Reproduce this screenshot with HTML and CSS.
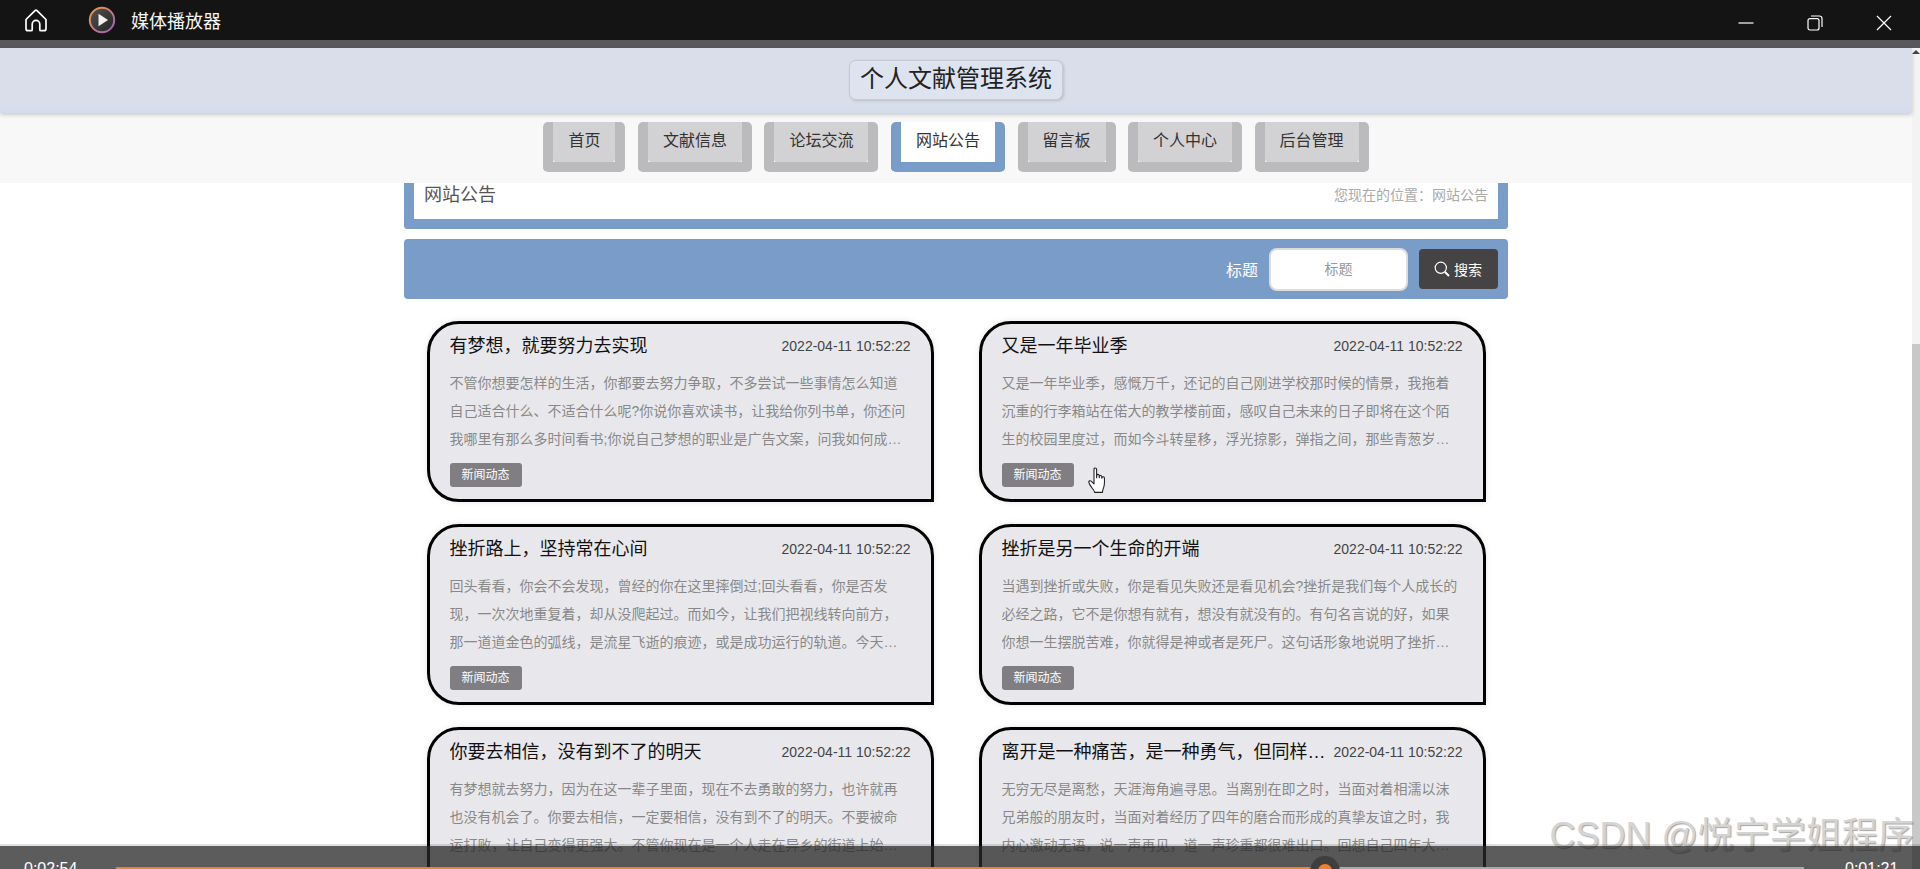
FILE: index.html
```html
<!DOCTYPE html>
<html lang="zh-CN">
<head>
    <meta charset="UTF-8">
    <title>媒体播放器</title>
    <link rel="stylesheet" href="styles.css">
</head>
<body>
    <div class="titlebar">
        <svg class="home-icon" width="24" height="24" viewBox="0 0 24 24" fill="none" stroke="#fff" stroke-width="1.7" stroke-linejoin="round">
            <path d="M2 11.5 11 2.6a1.4 1.4 0 0 1 2 0l9 8.9v9.2a2 2 0 0 1-2 2h-3.2a1 1 0 0 1-1-1v-5.5a3.8 3.8 0 0 0-7.6 0v5.5a1 1 0 0 1-1 1H4a2 2 0 0 1-2-2z"/>
        </svg>
        <svg class="player-logo" width="28" height="28" viewBox="0 0 28 28">
            <defs>
                <linearGradient id="ringGrad" x1="0" y1="0" x2="1" y2="1">
                    <stop offset="0" stop-color="#f59a3c"/>
                    <stop offset="1" stop-color="#9a5cc4"/>
                </linearGradient>
                <linearGradient id="discGrad" x1="0" y1="0" x2="1" y2="1">
                    <stop offset="0" stop-color="#555"/>
                    <stop offset="1" stop-color="#222"/>
                </linearGradient>
            </defs>
            <circle cx="14" cy="14" r="12.2" fill="url(#discGrad)" stroke="url(#ringGrad)" stroke-width="2"/>
            <path d="M10.5 7.8 20 14l-9.5 6.2z" fill="#f2f2f2"/>
        </svg>
        <span class="app-name">媒体播放器</span>
        <div class="window-btns">
            <span class="window-btn">
                <svg width="16" height="16" viewBox="0 0 16 16" stroke="#fff" stroke-width="1.2"><path d="M0.5 8h15"/></svg>
            </span>
            <span class="window-btn">
                <svg width="16" height="16" viewBox="0 0 16 16" fill="none" stroke="#fff" stroke-width="1.2">
                    <rect x="1" y="3.6" width="11" height="11.4" rx="2"/>
                    <path d="M4 1h8.5A2.5 2.5 0 0 1 15 3.5V12"/>
                </svg>
            </span>
            <span class="window-btn">
                <svg width="16" height="16" viewBox="0 0 16 16" stroke="#fff" stroke-width="1.2"><path d="M1 1l14 14M15 1 1 15"/></svg>
            </span>
        </div>
    </div>
    <div class="titlebar-strip"></div>

    <div class="app-area">
        <div class="page">
            <header class="site-header">
                <h1 class="site-title">个人文献管理系统</h1>
            </header>
            <nav class="site-nav">
                <a class="nav-item"><span>首页</span></a>
                <a class="nav-item"><span>文献信息</span></a>
                <a class="nav-item"><span>论坛交流</span></a>
                <a class="nav-item active"><span>网站公告</span></a>
                <a class="nav-item"><span>留言板</span></a>
                <a class="nav-item"><span>个人中心</span></a>
                <a class="nav-item"><span>后台管理</span></a>
            </nav>

            <main class="content">
                <div class="crumb-panel">
                    <div class="crumb-inner">
                        <span class="crumb-title">网站公告</span>
                        <span class="crumb-path">您现在的位置：网站公告</span>
                    </div>
                </div>

                <div class="search-bar">
                    <label class="search-label">标题</label>
                    <input class="search-input" placeholder="标题">
                    <button class="search-btn">
                        <svg width="16" height="16" viewBox="0 0 16 16" fill="none" stroke="#fff">
                            <circle cx="6.8" cy="6.8" r="5.6" stroke-width="1.2"/>
                            <path d="M11 11l4 4" stroke-width="2"/>
                        </svg>
                        搜索
                    </button>
                </div>

                <div class="news-grid">
                    <article class="news-card">
                        <div class="news-head">
                            <h3 class="news-title">有梦想，就要努力去实现</h3>
                            <span class="news-date">2022-04-11 10:52:22</span>
                        </div>
                        <p class="news-text">不管你想要怎样的生活，你都要去努力争取，不多尝试一些事情怎么知道自己适合什么、不适合什么呢?你说你喜欢读书，让我给你列书单，你还问我哪里有那么多时间看书;你说自己梦想的职业是广告文案，问我如何成为一名文案，却连一篇文章都不愿意动笔去写，这样又怎么能够实现梦想呢。</p>
                        <span class="news-tag">新闻动态</span>
                    </article>
                    <article class="news-card">
                        <div class="news-head">
                            <h3 class="news-title">又是一年毕业季</h3>
                            <span class="news-date">2022-04-11 10:52:22</span>
                        </div>
                        <p class="news-text">又是一年毕业季，感慨万千，还记的自己刚进学校那时候的情景，我拖着沉重的行李箱站在偌大的教学楼前面，感叹自己未来的日子即将在这个陌生的校园里度过，而如今斗转星移，浮光掠影，弹指之间，那些青葱岁月都已经成为了回忆，我们也即将各奔东西。</p>
                        <span class="news-tag">新闻动态</span>
                    </article>
                    <article class="news-card">
                        <div class="news-head">
                            <h3 class="news-title">挫折路上，坚持常在心间</h3>
                            <span class="news-date">2022-04-11 10:52:22</span>
                        </div>
                        <p class="news-text">回头看看，你会不会发现，曾经的你在这里摔倒过;回头看看，你是否发现，一次次地重复着，却从没爬起过。而如今，让我们把视线转向前方，那一道道金色的弧线，是流星飞逝的痕迹，或是成功运行的轨道。今天的你，是否已经准备好继续向前，把挫折留在身后。</p>
                        <span class="news-tag">新闻动态</span>
                    </article>
                    <article class="news-card">
                        <div class="news-head">
                            <h3 class="news-title">挫折是另一个生命的开端</h3>
                            <span class="news-date">2022-04-11 10:52:22</span>
                        </div>
                        <p class="news-text">当遇到挫折或失败，你是看见失败还是看见机会?挫折是我们每个人成长的必经之路，它不是你想有就有，想没有就没有的。有句名言说的好，如果你想一生摆脱苦难，你就得是神或者是死尸。这句话形象地说明了挫折是人生中不可避免的一部分，我们只能勇敢面对。</p>
                        <span class="news-tag">新闻动态</span>
                    </article>
                    <article class="news-card">
                        <div class="news-head">
                            <h3 class="news-title">你要去相信，没有到不了的明天</h3>
                            <span class="news-date">2022-04-11 10:52:22</span>
                        </div>
                        <p class="news-text">有梦想就去努力，因为在这一辈子里面，现在不去勇敢的努力，也许就再也没有机会了。你要去相信，一定要相信，没有到不了的明天。不要被命运打败，让自己变得更强大。不管你现在是一个人走在异乡的街道上始终都没有找到一丝归属感，还是你在跟朋友们一起吃饭开心。</p>
                        <span class="news-tag">新闻动态</span>
                    </article>
                    <article class="news-card">
                        <div class="news-head">
                            <h3 class="news-title">离开是一种痛苦，是一种勇气，但同样也是一个新的开始</h3>
                            <span class="news-date">2022-04-11 10:52:22</span>
                        </div>
                        <p class="news-text">无穷无尽是离愁，天涯海角遍寻思。当离别在即之时，当面对着相濡以沫兄弟般的朋友时，当面对着经历了四年的磨合而形成的真挚友谊之时，我内心激动无语，说一声再见，道一声珍重都很难出口。回想自己四年大学生活的点点滴滴，心中满是不舍与留恋之情。</p>
                        <span class="news-tag">新闻动态</span>
                    </article>
                </div>
            </main>
        </div>

        <div class="scrollbar">
            <span class="scroll-arrow"></span>
            <span class="scroll-thumb"></span>
        </div>
    </div>

    <!-- pointer captured in the video -->
    <svg class="hand-cursor" width="20" height="28" viewBox="0 0 20 28" fill="#fff" stroke="#222" stroke-width="1.1" stroke-linejoin="round">
        <path d="M6 2.2c0-1.6 2.6-1.6 2.6 0v8.6l.2-2.4c.2-1.4 2.4-1.3 2.4.2v2.2l.2-1.4c.3-1.3 2.3-1.2 2.4.2v1.7l.2-.8c.4-1.2 2.3-1 2.4.4.2 3.2.2 7-.8 9.7-.7 1.8-1.2 3.1-1.2 4.8H6.6c-.4-2-1.4-3-2.8-4.7C2.4 18.9 1 16.600.8 15.200c-.2-1.300 1.300-1.900 2.300-1L6 16.800z"/>
    </svg>

    <div class="watermark">CSDN @悦宁学姐程序</div>

    <div class="player-bar">
        <span class="time time-left">0:02:54</span>
        <div class="track">
            <div class="track-fill" style="width: 71.6%"><span class="track-thumb"></span></div>
        </div>
        <span class="time time-right">0:01:21</span>
    </div>
</body>
</html>
```

FILE: styles.css
```css
:root {
    --blue: #7a9cc9;
    --key-gray: #bbbabc;
    --key-face: #d2d1d3;
    --text-cjk: "Liberation Sans", "Noto Sans CJK SC", sans-serif;
}

* {
    margin: 0;
    padding: 0;
    box-sizing: border-box;
}

html, body {
    height: 100%;
    overflow: hidden;
}

body {
    position: relative;
    display: flex;
    flex-direction: column;
    font-family: var(--text-cjk);
    background: #fff;
    color: #333;
}

/* window title bar */
.titlebar {
    display: flex;
    align-items: center;
    flex: none;
    height: 40px;
    padding: 0 2px 0 24px;
    background: #141414;
}

.home-icon {
    margin-top: -1px;
}

.player-logo {
    margin-left: 40px;
}

.app-name {
    margin-left: 15px;
    font-size: 18px;
    color: #f5f5f5;
}

.window-btns {
    display: flex;
    margin-left: auto;
}

.window-btn {
    display: flex;
    align-items: center;
    justify-content: center;
    width: 69px;
    height: 40px;
    margin-top: 6px;
}

.titlebar-strip {
    flex: none;
    height: 8px;
    background: #58585c;
}

.app-area {
    display: flex;
    flex: 1;
    min-height: 0;
}

.page {
    flex: 1;
    min-width: 0;
}

/* site header */
.site-header {
    position: relative;
    z-index: 2;
    display: flex;
    align-items: center;
    justify-content: center;
    height: 65px;
    padding-bottom: 1px;
    background: linear-gradient(#d9deea, #d9deea 85%, #d4dded);
    box-shadow: 0 2px 4px rgba(0, 0, 0, 0.18);
}

.site-title {
    width: 214px;
    height: 40px;
    border: 1px solid #c6cad8;
    border-radius: 7px;
    background: #dde3ef;
    box-shadow: 1px 1px 3px rgba(0, 0, 0, 0.15);
    font-size: 24px;
    font-weight: normal;
    line-height: 36px;
    text-align: center;
    color: #222;
}

.site-nav {
    display: flex;
    justify-content: center;
    gap: 12.5px;
    height: 70px;
    padding-top: 9px;
    background: #f8f8f9;
}

.nav-item {
    height: 50px;
    border: 10px solid var(--key-gray);
    border-top: 0;
    border-radius: 5px;
}

.nav-item span {
    display: block;
    height: 40px;
    padding: 0 15px;
    border-radius: 0 0 3px 3px;
    background: var(--key-face);
    font-size: 16px;
    line-height: 38px;
    color: #333;
}

.nav-item.active {
    border-color: var(--blue);
}

.nav-item.active span {
    background: #fff;
}

/* main column */
.content {
    width: 1104px;
    margin: 0 auto;
}

.crumb-panel {
    border: 10px solid var(--blue);
    border-top: 0;
    border-radius: 0 0 4px 4px;
}

.crumb-inner {
    display: flex;
    justify-content: space-between;
    height: 36px;
    padding: 0 10px;
    line-height: 24px;
    background: #fff;
}

.crumb-title {
    font-size: 18px;
    color: #555;
}

.crumb-path {
    font-size: 14px;
    color: #aaa;
}

.search-bar {
    display: flex;
    align-items: center;
    justify-content: flex-end;
    gap: 11px;
    height: 60px;
    margin-top: 10px;
    padding-right: 10px;
    border-radius: 4px;
    background: var(--blue);
}

.search-label {
    font-size: 16px;
    color: #fff;
}

.search-input {
    width: 139px;
    height: 43px;
    border: 2px solid #dcdcdc;
    border-radius: 8px;
    background: #fff;
    font-family: var(--text-cjk);
    font-size: 14px;
    text-align: center;
}

.search-input::placeholder {
    color: #999;
}

.search-btn {
    display: flex;
    align-items: center;
    gap: 4px;
    width: 79px;
    height: 40px;
    padding-left: 15px;
    border: none;
    border-radius: 4px;
    background: #454344;
    font-family: var(--text-cjk);
    font-size: 14px;
    color: #fff;
}

/* news cards */
.news-grid {
    display: grid;
    grid-template-columns: 507px 507px;
    justify-content: center;
    gap: 22px 45px;
    margin-top: 22px;
}

.news-card {
    height: 181px;
    padding: 10px 20px 0;
    border: 3px solid #000;
    border-radius: 32px 32px 0 32px;
    background: #e8e8ec;
    box-shadow: 0 0 6px rgba(0, 0, 0, 0.1);
}

.news-head {
    display: flex;
    align-items: center;
    height: 24px;
}

.news-title {
    flex: 1;
    min-width: 0;
    overflow: hidden;
    font-size: 18px;
    font-weight: normal;
    line-height: 24px;
    white-space: nowrap;
    text-overflow: ellipsis;
    color: #111;
}

.news-date {
    flex: none;
    margin-left: 6px;
    font-size: 14px;
    color: #444;
}

.news-text {
    display: -webkit-box;
    margin-top: 11px;
    overflow: hidden;
    font-size: 14px;
    line-height: 28px;
    color: #888;
    -webkit-box-orient: vertical;
    -webkit-line-clamp: 3;
}

.news-tag {
    display: inline-block;
    height: 24px;
    margin-top: 10px;
    padding: 0 12px;
    border-radius: 3px;
    background: #807e82;
    font-size: 12px;
    line-height: 24px;
    color: #fff;
}

/* browser scrollbar */
.scrollbar {
    display: flex;
    flex-direction: column;
    align-items: center;
    flex: none;
    width: 8px;
    padding-top: 2px;
    background: #f3f3f3;
}

.scroll-arrow {
    width: 0;
    height: 0;
    border: 4px solid transparent;
    border-top: 0;
    border-bottom-color: #444;
}

.scroll-thumb {
    flex: 1;
    width: 100%;
    margin-top: 290px;
    background: #c8c8c8;
}

/* things lying over the page */
.hand-cursor {
    position: absolute;
    left: 1088px;
    top: 467px;
}

.watermark {
    position: absolute;
    right: 6px;
    bottom: 12px;
    font-size: 36px;
    line-height: 42px;
    white-space: nowrap;
    color: #d4d4d4;
    text-shadow: 1px 1px 1px rgba(90, 90, 90, 0.55);
}

.player-bar {
    position: absolute;
    left: 0;
    right: 0;
    bottom: 0;
    display: flex;
    height: 25px;
    border-top: 2px solid rgba(0, 0, 0, 0.12);
    background: rgba(41, 41, 41, 0.76);
    background-clip: padding-box;
}

.time {
    flex: none;
    margin-top: 15px;
    font-size: 16px;
    line-height: 16px;
    color: #fff;
}

.time-left {
    width: 116px;
    padding-left: 24px;
}

.time-right {
    width: 116px;
    padding-left: 41px;
}

.track {
    flex: 1;
    height: 2px;
    margin-top: 21px;
    background: #a9a9a9;
}

.track-fill {
    position: relative;
    height: 100%;
    background: #f27f2c;
}

.track-thumb {
    position: absolute;
    right: -7px;
    top: -3px;
    width: 14px;
    height: 14px;
    border-radius: 50%;
    background: #f27f2c;
    box-shadow: 0 0 0 8px #3f3f3f;
}
```
